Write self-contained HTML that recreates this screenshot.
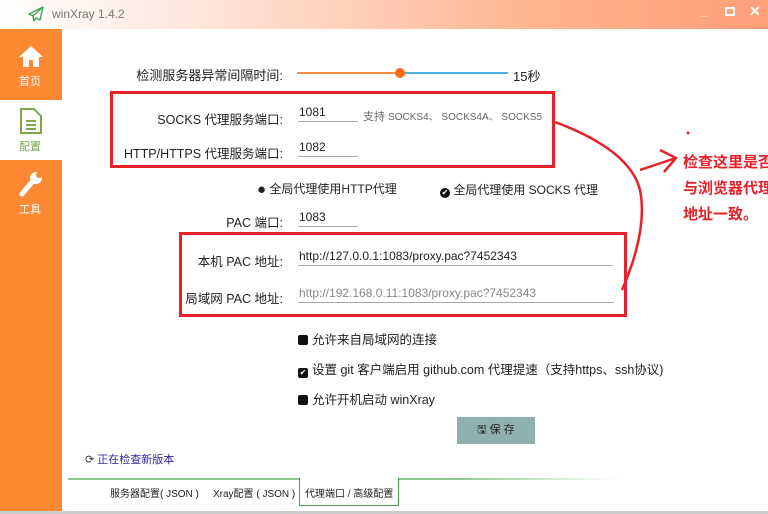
<!DOCTYPE html>
<html><head><meta charset="utf-8"><style>
*{margin:0;padding:0;box-sizing:border-box}
body{width:768px;height:514px;overflow:hidden;background:#fff;font-family:"Liberation Sans","Noto Sans CJK SC",sans-serif;color:#222;position:relative}
.a{position:absolute;white-space:nowrap}
.t{font-size:12px}
.title{left:0;top:0;width:768px;height:29px;background:linear-gradient(90deg,#fff 0%,#ffe6dc 25%,#ffb48f 70%,#ff9f78 100%)}
.side{left:0;top:29px;width:62px;height:483px;background:#ff8833}
.lbl{text-align:right;font-size:12px}
.inp{border-bottom:1px solid #aaa;font-size:12px;padding-left:1px;height:17px;line-height:15px}
.rb{border:3px solid #e8202a}
.bx{display:inline-block;width:10px;height:10px;background:#111;border-radius:2px;vertical-align:-1px;margin-right:4px}
</style></head><body>
<div class="a title"></div>
<svg class="a" style="left:28px;top:6px" width="16" height="16" viewBox="0 0 16 16"><path d="M15 1L1 8l4 2 1 5 2-3 4 2z" fill="none" stroke="#3aa655" stroke-width="1.4" stroke-linejoin="round"/><path d="M15 1L5 10" stroke="#3aa655" stroke-width="1.2"/></svg>
<div class="a" style="left:52px;top:7px;font-size:12px;color:#777">winXray 1.4.2</div>
<div class="a" style="left:701px;top:4px;font-size:12px;color:#fff;font-weight:bold">_</div>
<div class="a" style="left:725px;top:7px;width:10px;height:9px;border:2px solid #fff"></div>
<div class="a" style="left:749px;top:3px;font-size:14px;color:#fff;font-weight:bold">✕</div>
<div class="a side"></div>
<div class="a" style="left:0;top:100px;width:62px;height:60px;background:#fff"></div>
<svg class="a" style="left:18px;top:44px" width="26" height="24" viewBox="0 0 26 24"><path d="M13 2L1 13h4v10h6v-7h4v7h6V13h4z" fill="#fff"/></svg>
<div class="a" style="left:19px;top:73px;font-size:11px;color:#fff">首页</div>
<svg class="a" style="left:19px;top:107px" width="24" height="28" viewBox="0 0 24 28"><path d="M2 2h13l7 7v17H2z" fill="none" stroke="#7ca84a" stroke-width="2"/><path d="M7 14h10M7 18h10M7 22h10" stroke="#7ca84a" stroke-width="2"/></svg>
<div class="a" style="left:19px;top:138px;font-size:11px;color:#7ca84a">配置</div>
<svg class="a" style="left:18px;top:170px" width="26" height="28" viewBox="0 0 26 28"><path d="M4 24L14 12" stroke="#fff" stroke-width="5" stroke-linecap="round"/><circle cx="18" cy="8" r="6" fill="#fff"/><circle cx="21" cy="5" r="3" fill="#ff8833"/></svg>
<div class="a" style="left:19px;top:201px;font-size:11px;color:#fff">工具</div>

<div class="a lbl" style="right:485px;top:65px;font-size:13px">检测服务器异常间隔时间:</div>
<div class="a" style="left:297px;top:72px;width:103px;height:2px;background:#ff8c42"></div>
<div class="a" style="left:400px;top:72px;width:108px;height:2px;background:#4ab3e0"></div>
<div class="a" style="left:395px;top:68px;width:10px;height:10px;border-radius:50%;background:#ff6a10"></div>
<div class="a" style="left:513px;top:66px;font-size:13px">15秒</div>

<div class="a rb" style="left:110px;top:91px;width:445px;height:77px"></div>
<div class="a lbl" style="right:485px;top:109px;font-size:12.5px">SOCKS 代理服务端口:</div>
<div class="a inp" style="left:298px;top:105px;width:60px">1081</div>
<div class="a" style="left:363px;top:108px;font-size:11px;color:#666">支持 <span style="font-size:10px">SOCKS4、 SOCKS4A、 SOCKS5</span></div>
<div class="a lbl" style="right:485px;top:143px;font-size:12.5px">HTTP/HTTPS 代理服务端口:</div>
<div class="a inp" style="left:298px;top:140px;width:60px">1082</div>

<div class="a t" style="left:257px;top:180px"><span style="font-size:15px;vertical-align:-1px">●</span> 全局代理使用HTTP代理</div>
<div class="a t" style="left:440px;top:181px"><span style="display:inline-block;width:10px;height:10px;border-radius:50%;background:#111;color:#fff;font-size:8px;line-height:10px;text-align:center;vertical-align:-1px">✔</span> 全局代理使用 SOCKS 代理</div>
<div class="a lbl" style="right:485px;top:212px;font-size:12.5px">PAC 端口:</div>
<div class="a inp" style="left:298px;top:210px;width:60px">1083</div>

<div class="a rb" style="left:179px;top:232px;width:448px;height:85px"></div>
<div class="a lbl" style="right:485px;top:251px;font-size:12.5px">本机 PAC 地址:</div>
<div class="a inp" style="left:298px;top:249px;width:315px">http://127.0.0.1:1083/proxy.pac?7452343</div>
<div class="a lbl" style="right:485px;top:288px;font-size:12.5px">局域网 PAC 地址:</div>
<div class="a inp" style="left:298px;top:286px;width:316px;color:#888">http://192.168.0.11:1083/proxy.pac?7452343</div>

<div class="a t" style="left:298px;top:329px;font-size:12.5px"><span class="bx"></span>允许来自局域网的连接</div>
<div class="a t" style="left:298px;top:359px;font-size:12.5px"><span class="bx" style="color:#fff;font-size:8px;line-height:10px;text-align:center">✔</span>设置 git 客户端启用 github.com 代理提速（支持https、ssh协议)</div>
<div class="a t" style="left:298px;top:389px;font-size:12.5px"><span class="bx"></span>允许开机启动 winXray</div>
<div class="a" style="left:457px;top:417px;width:78px;height:27px;background:#8fb1ae;font-size:11px;text-align:center;line-height:27px">🖫 保 存</div>
<div class="a" style="left:85px;top:451px;font-size:11px;color:#2a2aa0"><span style="color:#333">⟳</span> 正在检查新版本</div>

<div class="a" style="left:68px;top:478px;width:550px;height:2px;background:linear-gradient(90deg,#8cc88c 70%,#fff)"></div>
<div class="a" style="left:299px;top:478px;width:100px;height:28px;border:1.5px solid #4aa04a;border-top:none;background:#fff"></div>
<div class="a" style="left:110px;top:485px;font-size:10px">服务器配置( JSON )</div>
<div class="a" style="left:213px;top:485px;font-size:10px">Xray配置 ( JSON )</div>
<div class="a" style="left:305px;top:485px;font-size:10px">代理端口 / 高级配置</div>
<div class="a" style="left:0;top:511px;width:768px;height:3px;background:#ccc"></div>

<svg class="a" style="left:0;top:0" width="768" height="514">
<path d="M555 122 Q630 150 640 190 Q648 230 622 290" fill="none" stroke="#e8202a" stroke-width="2.5"/>
<path d="M640 170 L676 158 M660 150 L676 158 L664 172" fill="none" stroke="#e8202a" stroke-width="2.5"/>
<circle cx="688" cy="133" r="1.5" fill="#e8202a"/>
</svg>
<div class="a" style="left:683px;top:150px;font-size:15px;font-weight:bold;color:#e8202a;line-height:26px">检查这里是否<br>与浏览器代理<br>地址一致。</div>
</body></html>
